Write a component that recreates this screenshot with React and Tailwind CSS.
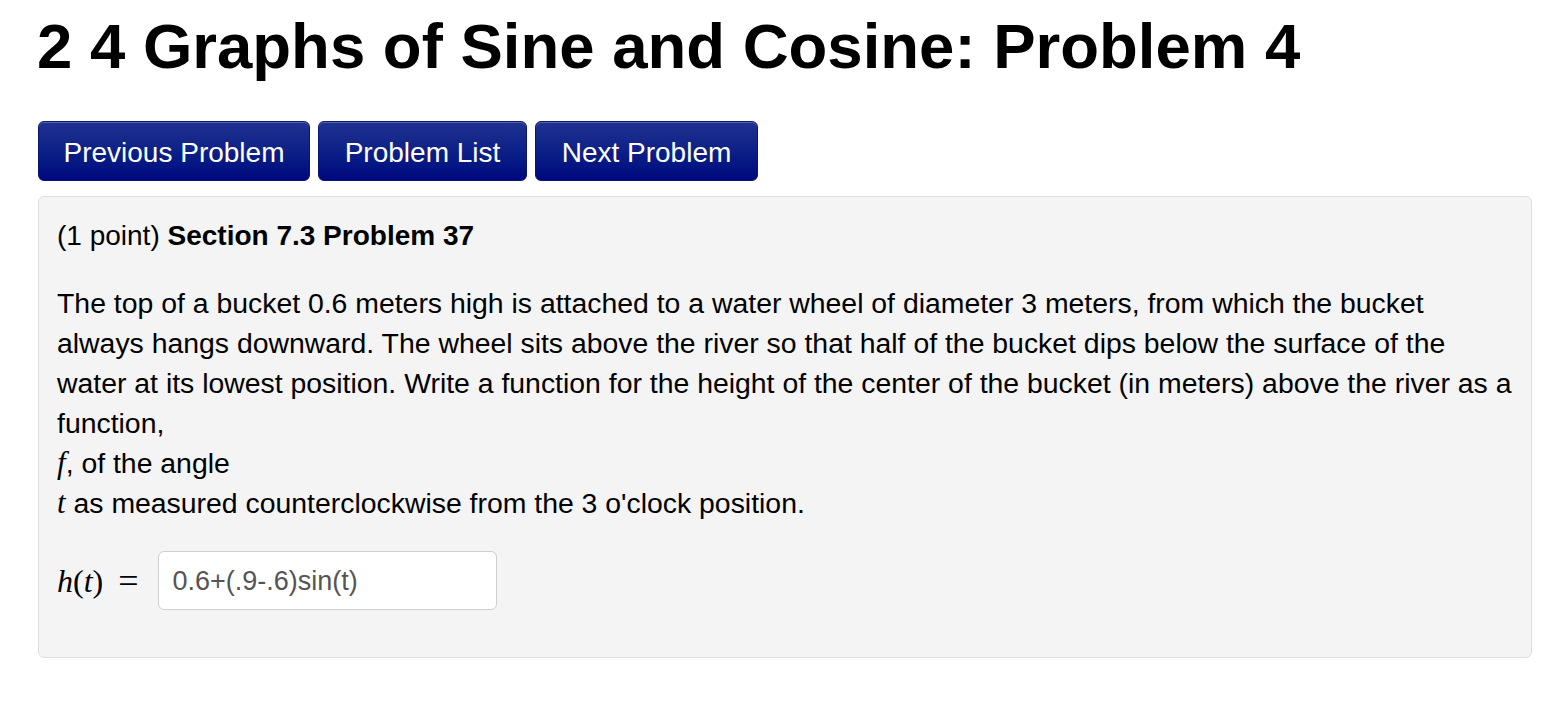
export default function App() {
  const btn =
    "h-[60px] pt-[3px] rounded-[6px] border border-[#0b1670] bg-gradient-to-b from-[#1f3190] to-[#00067e] text-white text-[28px] leading-none shadow-[inset_0_1px_0_rgba(255,255,255,0.25)]";
  const mathI = "font-['Liberation_Serif',serif] italic text-[31px] leading-none";
  return (
    <div className="min-h-screen bg-white px-[38px] font-['Liberation_Sans',Arial,sans-serif] text-black">
      <h1 className="mt-[11px] text-[63.5px] font-bold leading-[70px] -ml-[1px]">
        2 4 Graphs of Sine and Cosine: Problem 4
      </h1>
      <div className="mt-[40px] flex gap-[8px]">
        <button className={btn + " w-[272px]"}>Previous Problem</button>
        <button className={btn + " w-[209px]"}>Problem List</button>
        <button className={btn + " w-[223px]"}>Next Problem</button>
      </div>
      <div className="mt-[15px] w-[1494px] h-[462px] rounded-[6px] border border-[#dedede] bg-[#f4f4f4] px-[18px] pt-[19px] text-[28px] leading-[40px] whitespace-nowrap">
        <div>
          (1 point) <b>Section 7.3 Problem 37</b>
        </div>
        <p className="mt-[27px] text-[28.4px]">
          The top of a bucket 0.6 meters high is attached to a water wheel of diameter 3 meters, from which the bucket
          <br />
          always hangs downward. The wheel sits above the river so that half of the bucket dips below the surface of the
          <br />
          water at its lowest position. Write a function for the height of the center of the bucket (in meters) above the
          river as a
          <br />
          function,
          <br />
          <span className={mathI}>f</span>, of the angle
          <br />
          <span className={mathI}>t</span> as measured counterclockwise from the 3 o'clock position.
        </p>
        <div className="mt-[28px] flex items-center">
          <span className="font-['Liberation_Serif',serif] text-[32px] leading-none flex items-center">
            <span>
              <i>h</i>(<i>t</i>)
            </span>
            <span className="ml-[15px] text-[36px]">=</span>
          </span>
          <div className="ml-[19px] w-[339px] h-[59px] rounded-[6px] border border-[#cfcfcf] bg-white pl-[14px] flex items-center text-[27px] text-[#555]">
            0.6+(.9-.6)sin(t)
          </div>
        </div>
      </div>
    </div>
  );
}
